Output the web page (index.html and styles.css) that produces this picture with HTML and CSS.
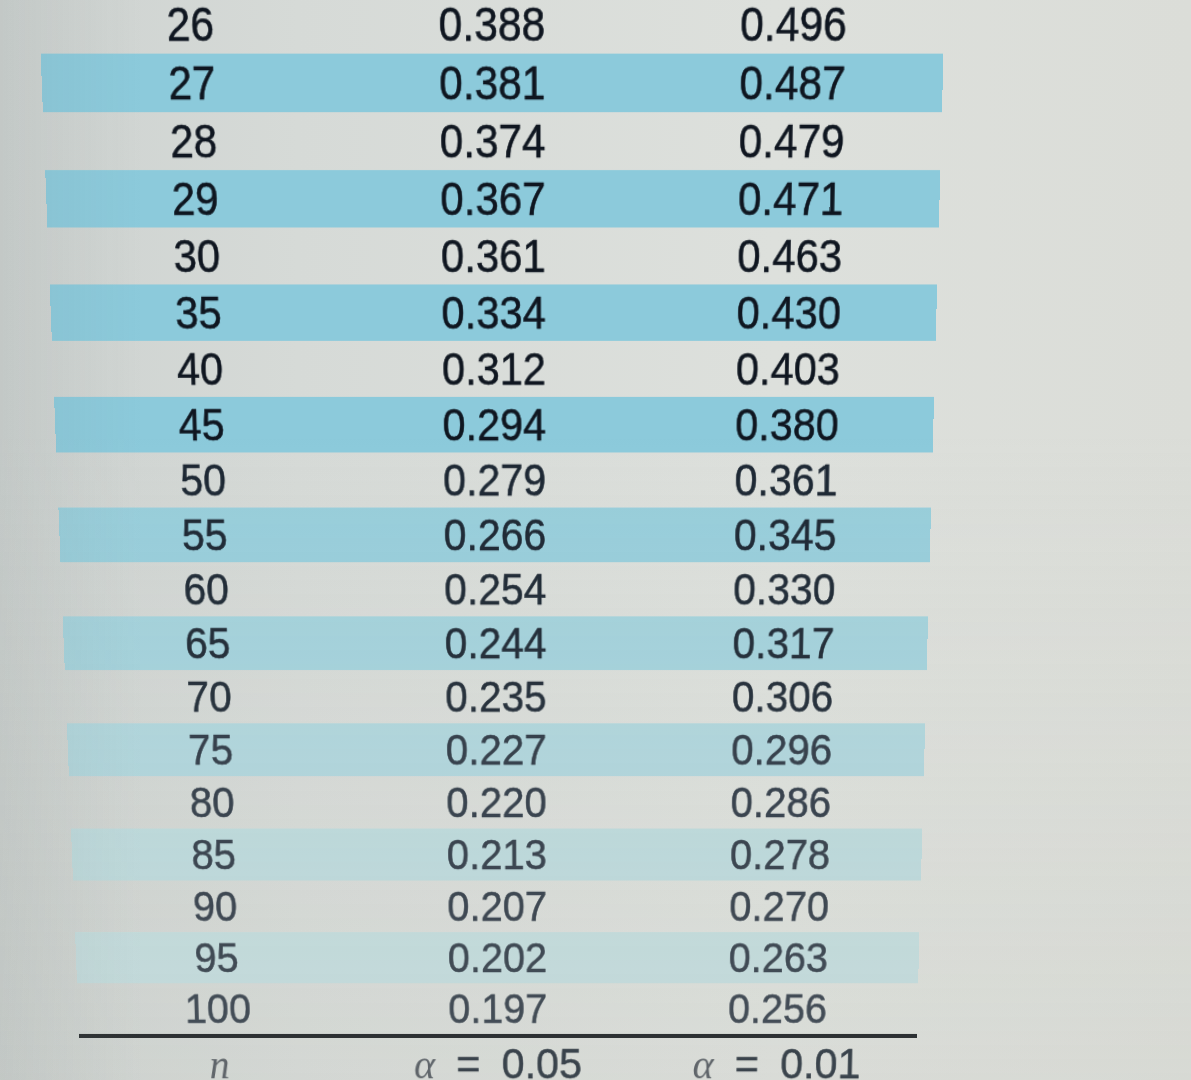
FILE: index.html
```html
<!DOCTYPE html>
<html lang="en">
<head>
<meta charset="utf-8">
<title>Critical values table</title>
<link rel="stylesheet" href="styles.css">
</head>
<body>
<div class="screen">
  <div class="sheet">
    <div class="row"><span>26</span><span>0.388</span><span>0.496</span></div>
    <div class="row"><span>27</span><span>0.381</span><span>0.487</span></div>
    <div class="row"><span>28</span><span>0.374</span><span>0.479</span></div>
    <div class="row"><span>29</span><span>0.367</span><span>0.471</span></div>
    <div class="row"><span>30</span><span>0.361</span><span>0.463</span></div>
    <div class="row"><span>35</span><span>0.334</span><span>0.430</span></div>
    <div class="row"><span>40</span><span>0.312</span><span>0.403</span></div>
    <div class="row"><span>45</span><span>0.294</span><span>0.380</span></div>
    <div class="row"><span>50</span><span>0.279</span><span>0.361</span></div>
    <div class="row"><span>55</span><span>0.266</span><span>0.345</span></div>
    <div class="row"><span>60</span><span>0.254</span><span>0.330</span></div>
    <div class="row"><span>65</span><span>0.244</span><span>0.317</span></div>
    <div class="row"><span>70</span><span>0.235</span><span>0.306</span></div>
    <div class="row"><span>75</span><span>0.227</span><span>0.296</span></div>
    <div class="row"><span>80</span><span>0.220</span><span>0.286</span></div>
    <div class="row"><span>85</span><span>0.213</span><span>0.278</span></div>
    <div class="row"><span>90</span><span>0.207</span><span>0.270</span></div>
    <div class="row"><span>95</span><span>0.202</span><span>0.263</span></div>
    <div class="row"><span>100</span><span>0.197</span><span>0.256</span></div>
    <div class="row foot">
      <span><i class="sym">n</i></span>
      <span><i class="sym">α</i><span class="eq">=</span>0.05</span>
      <span><i class="sym">α</i><span class="eq">=</span>0.01</span>
    </div>
  </div>
</div>
</body>
</html>
```

FILE: styles.css
```css
html, body {
  margin: 0;
  height: 100%;
  overflow: hidden;
}

body {
  background: linear-gradient(to right, #cdd2d0 0%, #d6dad7 25%, #dde0dc 65%, #dbddd8 100%);
  font-family: "Liberation Sans", Arial, sans-serif;
  color: #0f1620;
}

body::after {
  content: "";
  position: fixed;
  inset: 0;
  pointer-events: none;
  background:
    linear-gradient(to right, rgba(110, 120, 120, 0.1) 0%, rgba(110, 120, 120, 0) 12%),
    linear-gradient(to bottom, rgba(206, 209, 201, 0) 0%, rgba(206, 209, 201, 0) 40%, rgba(200, 203, 195, 0.18) 100%);
}

.screen {
  padding: 61px 0 0 60px;
}

.sheet {
  width: 870px;
  transform-origin: 435px 487px;
  transform: perspective(4765px) rotateX(-20deg) scaleY(1.16) skewX(0.37deg);
}

.row {
  display: grid;
  grid-template-columns: 290px 290px 290px;
  height: 50px;
  align-items: center;
  text-align: center;
  font-size: 41px;
  line-height: 50px;
  -webkit-text-stroke: 0.5px currentColor;
}

.row:nth-child(n+9) {
  color: #1c2733;
}

.row:nth-child(n+14) {
  color: #2a3542;
}

.row:nth-child(even) {
  background: #8ccadb;
}

.row:nth-child(10) {
  background: #98cedb;
}

.row:nth-child(12) {
  background: #a3d2dc;
}

.row:nth-child(14) {
  background: #afd6dd;
}

.row:nth-child(16) {
  background: #bcdadd;
}

.row:nth-child(18) {
  background: #c2dcde;
}

.row.foot {
  background: none;
  border-top: 4px solid #0e1216;
  font-size: 43px;
  color: #1c2733;
}

.sym {
  font-family: "Liberation Serif", "Times New Roman", serif;
  font-style: italic;
  font-size: 42px;
  color: #4a5058;
  -webkit-text-stroke: 0;
}

.eq {
  margin: 0 22px;
}
```
